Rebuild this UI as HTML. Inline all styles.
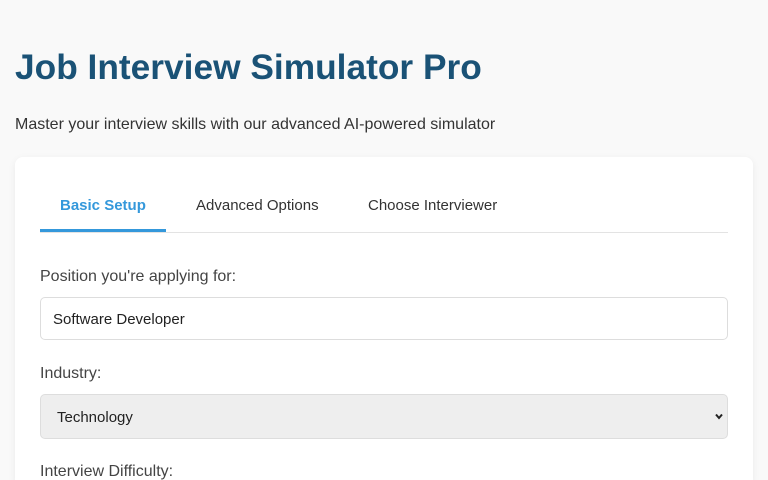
<!DOCTYPE html>
<html><head><style>
html,body{margin:0;height:480px;overflow:hidden}
body{background:#f9f9f9;font-family:"Liberation Sans",Arial,sans-serif;width:768px;position:relative}
h1{position:absolute;left:15px;top:45px;margin:0;font-size:35.3px;font-weight:bold;color:#1a5276;line-height:46px}
.sub{position:absolute;left:15px;top:116px;font-size:16px;color:#333}
.card{position:absolute;left:15px;top:157px;width:738px;height:330px;background:#fff;border-radius:8px;box-shadow:0 2px 8px rgba(0,0,0,.06)}
.tab{position:absolute;top:197px;font-size:15px;color:#333}
.line{position:absolute;left:40px;top:232px;width:688px;height:1px;background:#e3e3e3}
.ul{position:absolute;left:40px;top:229px;width:126px;height:3px;background:#3498db}
.lab{position:absolute;left:40px;font-size:16px;color:#444}
.inp{position:absolute;left:40px;width:686px;border:1px solid #ddd;border-radius:5px;font-size:15px;color:#222;box-sizing:content-box}
</style></head><body>
<h1>Job Interview Simulator Pro</h1>
<div class="sub">Master your interview skills with our advanced AI-powered simulator</div>
<div class="card"></div>
<div class="tab" style="left:60px;color:#3498db;font-weight:bold">Basic Setup</div>
<div class="tab" style="left:196px">Advanced Options</div>
<div class="tab" style="left:368px">Choose Interviewer</div>
<div class="line"></div><div class="ul"></div>
<div class="lab" style="top:268px">Position you're applying for:</div>
<div class="inp" style="top:297px;height:41px;line-height:43px;text-indent:12px">Software Developer</div>
<div class="lab" style="top:365px">Industry:</div>
<div class="inp" style="top:394px;height:43px;line-height:45px;text-indent:16px;background:#eee">Technology<svg style="position:absolute;right:4px;top:18px" width="8" height="7" viewBox="0 0 8 7"><path d="M1 1.5L4 5L7 1.5" fill="none" stroke="#222" stroke-width="2"/></svg></div>
<div class="lab" style="top:463px">Interview Difficulty:</div>
</body></html>
